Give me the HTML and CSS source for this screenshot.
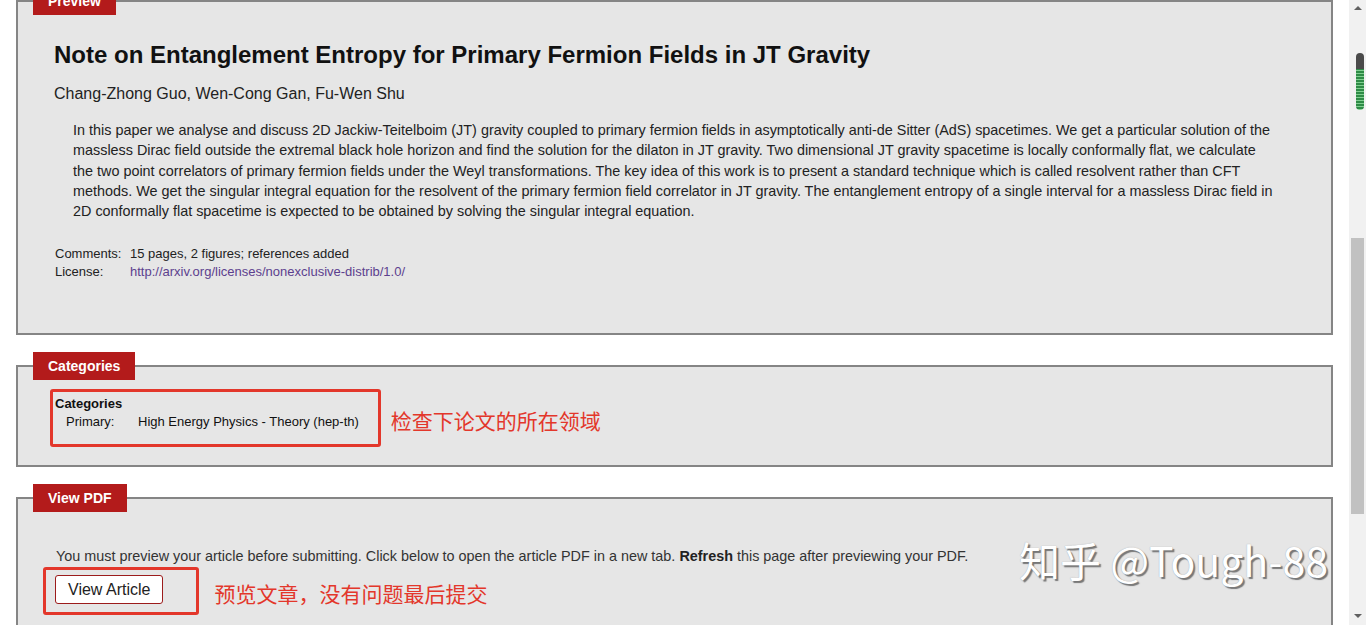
FILE: index.html
```html
<!DOCTYPE html>
<html lang="en">
<head>
<meta charset="utf-8">
<title>Preview</title>
<link rel="stylesheet" href="styles.css">
</head>
<body>
<div class="page">
  <main class="content">
    <fieldset class="box box-preview">
      <legend class="tab">Preview</legend>
      <h1 class="title">Note on Entanglement Entropy for Primary Fermion Fields in JT Gravity</h1>
      <p class="authors">Chang-Zhong Guo, Wen-Cong Gan, Fu-Wen Shu</p>
      <p class="abstract">In this paper we analyse and discuss 2D Jackiw-Teitelboim (JT) gravity coupled to primary fermion fields in asymptotically anti-de Sitter (AdS) spacetimes. We get a particular solution of the massless Dirac field outside the extremal black hole horizon and find the solution for the dilaton in JT gravity. Two dimensional JT gravity spacetime is locally conformally flat, we calculate the two point correlators of primary fermion fields under the Weyl transformations. The key idea of this work is to present a standard technique which is called resolvent rather than CFT methods. We get the singular integral equation for the resolvent of the primary fermion field correlator in JT gravity. The entanglement entropy of a single interval for a massless Dirac field in 2D conformally flat spacetime is expected to be obtained by solving the singular integral equation.</p>
      <dl class="meta">
        <div class="meta-row"><dt>Comments:</dt><dd>15 pages, 2 figures; references added</dd></div>
        <div class="meta-row"><dt>License:</dt><dd><a class="link" href="#">http://arxiv.org/licenses/nonexclusive-distrib/1.0/</a></dd></div>
      </dl>
    </fieldset>

    <fieldset class="box box-cats">
      <legend class="tab">Categories</legend>
      <div class="note-row note-row-cats">
        <div class="mark mark-cats">
          <div class="cats-head">Categories</div>
          <div class="cats-row"><span class="cats-label">Primary:</span><span>High Energy Physics - Theory (hep-th)</span></div>
        </div>
        <span class="note note-cats">检查下论文的所在领域</span>
      </div>
    </fieldset>

    <fieldset class="box box-pdf">
      <legend class="tab">View PDF</legend>
      <p class="pdf-text">You must preview your article before submitting. Click below to open the article PDF in a new tab. <b>Refresh</b> this page after previewing your PDF.</p>
      <div class="note-row note-row-pdf">
        <div class="mark mark-pdf">
          <button class="btn" type="button">View Article</button>
        </div>
        <span class="note note-pdf">预览文章，没有问题最后提交</span>
      </div>
    </fieldset>
  </main>

  <aside class="scrollbar">
    <span class="arrow arrow-up"></span>
    <div class="thumb"></div>
    <span class="arrow arrow-down"></span>
    <div class="gauge"></div>
  </aside>

  <div class="watermark">知乎 @Tough-88</div>
</div>
</body>
</html>
```

FILE: styles.css
```css
html, body {
  margin: 0;
  padding: 0;
  height: 625px;
  overflow: hidden;
  background: #ffffff;
}

body {
  font-family: "Liberation Sans", Arial, "Noto Sans CJK SC", sans-serif;
  color: #222;
}

.page {
  position: relative;
  display: flex;
  height: 625px;
}

.content {
  flex: 1;
  padding: 0 16px;
  margin-top: -13px;
  min-width: 0;
}

.box {
  margin: 0 0 17px;
  padding: 0 15px;
  border: 2px solid #858585;
  background: #e6e6e6;
  min-width: 0;
}

.tab {
  background: #b31b1b;
  color: #fff;
  font-weight: bold;
  font-size: 14px;
  line-height: 16px;
  padding: 6px 15px;
  margin: 0;
}

/* Preview */
.box-preview {
  padding-bottom: 52px;
}

.title {
  margin: 26px 0 0 21px;
  font-size: 24px;
  line-height: 28px;
  font-weight: bold;
  color: #111;
}

.authors {
  margin: 15px 0 0 21px;
  font-size: 16px;
  line-height: 20px;
  color: #222;
}

.abstract {
  margin: 16px 40px 0 40px;
  font-size: 14.4px;
  line-height: 20.25px;
  color: #222;
}

.meta {
  margin: 24px 0 0 22px;
  font-size: 13px;
  line-height: 18px;
  color: #222;
}

.meta-row {
  display: flex;
}

.meta dt {
  width: 75px;
}

.meta dd {
  margin: 0;
}

.link {
  color: #5c3f8e;
  text-decoration: none;
}

/* Annotations */
.note-row {
  display: flex;
  align-items: center;
}

.mark {
  border: 3px solid #e3372b;
  border-radius: 3px;
}

.note {
  font-family: "Noto Sans CJK SC", sans-serif;
  font-size: 21px;
  line-height: 28px;
  color: #e3372b;
}

/* Categories */
.box-cats {
  padding-bottom: 18px;
}

.note-row-cats {
  margin: 9px 0 0 17px;
}

.mark-cats {
  padding: 3px 19px 13px 2px;
  font-size: 13px;
  line-height: 18px;
  color: #111;
}

.cats-head {
  font-weight: bold;
}

.cats-row {
  display: flex;
  padding-left: 11px;
}

.cats-label {
  width: 72px;
}

.note-cats {
  margin: 4px 0 0 10px;
}

/* View PDF */
.box-pdf {
  padding-bottom: 40px;
}

.pdf-text {
  margin: 35px 0 0 23px;
  font-size: 14.4px;
  line-height: 18px;
  color: #333;
}

.pdf-text b {
  color: #222;
}

.note-row-pdf {
  margin: 2px 0 0 10px;
}

.mark-pdf {
  padding: 5px 33px 8px 9px;
}

.btn {
  display: block;
  font-family: "Liberation Sans", Arial, sans-serif;
  font-size: 16px;
  line-height: 19px;
  height: 29px;
  padding: 4px 12px;
  background: #fff;
  color: #222;
  border: 1px solid #9c1c1c;
  border-radius: 3px;
}

.note-pdf {
  margin: 4px 0 0 15px;
}

/* Scrollbar */
.scrollbar {
  position: relative;
  width: 17px;
  flex: none;
  background: #f1f1f1;
  display: flex;
  flex-direction: column;
  align-items: center;
}

.arrow {
  width: 0;
  height: 0;
  border-left: 4px solid transparent;
  border-right: 4px solid transparent;
}

.arrow-up {
  margin-top: 6px;
  border-bottom: 4px solid #606060;
}

.arrow-down {
  margin-top: auto;
  margin-bottom: 7px;
  border-top: 4px solid #606060;
}

.thumb {
  margin-top: 228px;
  width: 13px;
  height: 276px;
  background: #c1c1c1;
}

.gauge {
  position: absolute;
  left: 7px;
  top: 53px;
  width: 8px;
  height: 57px;
  border-radius: 4px;
  background:
    linear-gradient(#4a4a4a 0 16px, transparent 16px),
    repeating-linear-gradient(#2e8b46 0 2px, #7fcf8f 2px 3px);
}

.watermark {
  position: absolute;
  left: 1019px;
  top: 533px;
  font-family: "Noto Sans CJK SC", sans-serif;
  font-size: 41px;
  line-height: 52px;
  color: #fff;
  text-shadow: 2px 2px 1px #777, 0 0 1px #999;
  white-space: nowrap;
}
```
